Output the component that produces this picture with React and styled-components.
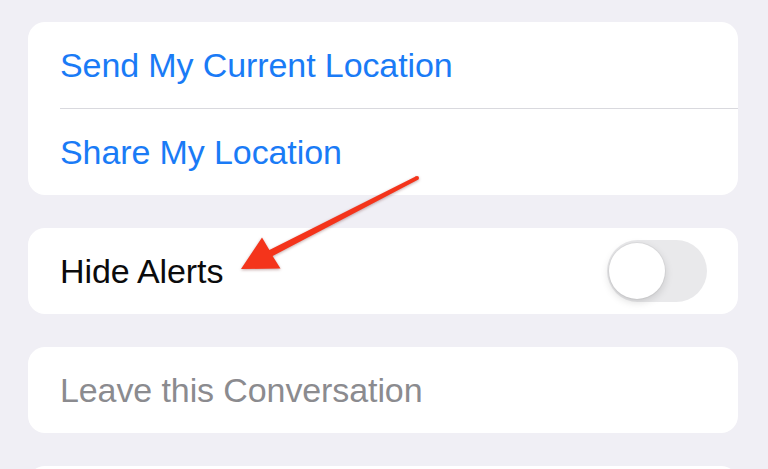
import styled, { createGlobalStyle } from 'styled-components';

const GlobalStyle = createGlobalStyle`
  html, body {
    margin: 0;
    background: #f0eff5;
  }
  body {
    font-family: "Liberation Sans", Arial, sans-serif;
    -webkit-font-smoothing: antialiased;
  }
`;

const Page = styled.div`
  position: relative;
  width: 768px;
  height: 469px;
  overflow: hidden;
  box-sizing: border-box;
  padding: 22px 30px 0 28px;
  display: flex;
  flex-direction: column;
  gap: 33px;
`;

const Group = styled.div`
  background: #ffffff;
  border-radius: 17px;
  display: flex;
  flex-direction: column;
  flex-shrink: 0;
`;

const Row = styled.div`
  height: 86px;
  display: flex;
  align-items: center;
  justify-content: space-between;
  padding: 0 31px 0 32px;
  box-sizing: border-box;
  & + & {
    border-top: 1px solid #d9d9de;
    margin-left: 32px;
    padding-left: 0;
    height: 87px;
  }
`;

const colors = {
  action: '#1a7bf6',
  plain: '#0b0b0c',
  disabled: '#8b8b8f',
};

const Label = styled.span`
  font-size: 34px;
  letter-spacing: -0.1px;
  color: ${(p) => colors[p.$tone || 'plain']};
`;

const Track = styled.div`
  width: 100px;
  height: 62px;
  border-radius: 31px;
  background: #e9e9eb;
  display: flex;
  align-items: center;
  padding: 0 2px;
  box-sizing: border-box;
`;

const Knob = styled.div`
  width: 56px;
  height: 56px;
  border-radius: 50%;
  background: #ffffff;
  box-shadow: 0 3px 8px rgba(0, 0, 0, 0.15), 0 0 0 1px rgba(0, 0, 0, 0.04);
`;

const Overlay = styled.svg`
  position: absolute;
  left: 0;
  top: 0;
  pointer-events: none;
  filter: drop-shadow(0 1px 1.5px rgba(80, 0, 0, 0.35));
`;

function Toggle() {
  return (
    <Track>
      <Knob />
    </Track>
  );
}

export default function App() {
  return (
    <>
      <GlobalStyle />
      <Page>
        <Group>
          <Row>
            <Label $tone="action">Send My Current Location</Label>
          </Row>
          <Row>
            <Label $tone="action">Share My Location</Label>
          </Row>
        </Group>
        <Group>
          <Row>
            <Label>Hide Alerts</Label>
            <Toggle />
          </Row>
        </Group>
        <Group>
          <Row>
            <Label $tone="disabled">Leave this Conversation</Label>
          </Row>
        </Group>
        <Group>
          <Row />
        </Group>

        <Overlay width="768" height="469" viewBox="0 0 768 469">
          <polygon
            fill="#f4341b"
            points="416.1,176.2 269.4,249.9 262,237.5 241,269 280.5,268.5 272.6,256.1 417.9,179.8"
          />
          <circle cx="417" cy="178" r="2" fill="#f4341b" />
        </Overlay>
      </Page>
    </>
  );
}
